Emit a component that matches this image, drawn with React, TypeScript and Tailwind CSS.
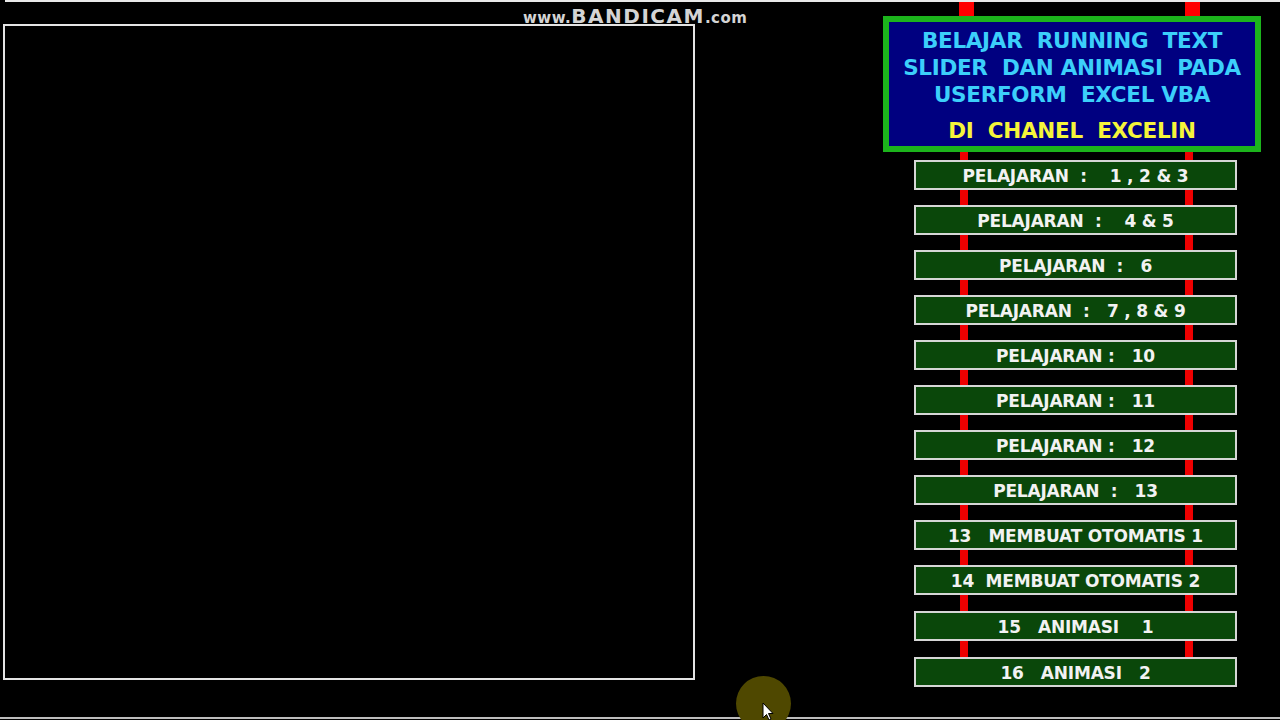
const LESSONS = [
  "PELAJARAN  :    1 , 2 & 3",
  "PELAJARAN  :    4 & 5",
  "PELAJARAN  :   6",
  "PELAJARAN  :   7 , 8 & 9",
  "PELAJARAN :   10",
  "PELAJARAN :   11",
  "PELAJARAN :   12",
  "PELAJARAN  :   13",
  "13   MEMBUAT OTOMATIS 1",
  "14  MEMBUAT OTOMATIS 2",
  "15   ANIMASI    1",
  "16   ANIMASI   2",
];

const font = { fontFamily: '"DejaVu Sans", Verdana, sans-serif' };

function Ropes({ h, wide }: { h: string; wide?: boolean }) {
  return (
    <div className={`flex ${h}`}>
      {wide ? (
        <>
          <div className="ml-[76px] w-[15px] bg-[#ff0000]" />
          <div className="ml-[211px] w-[15px] bg-[#ff0000]" />
        </>
      ) : (
        <>
          <div className="ml-[77px] w-[8px] bg-[#ee0000]" />
          <div className="ml-[217px] w-[8px] bg-[#ee0000]" />
        </>
      )}
    </div>
  );
}

export default function App() {
  return (
    <div className="relative w-[1280px] h-[720px] overflow-hidden bg-black" style={font}>
      <div className="flex h-full">
        <div className="ml-[3px] mt-[24px] w-[692px] h-[656px] border-2 border-[#e4e4e4] shrink-0" />
        <div className="ml-[188px] w-[378px] flex flex-col">
          <Ropes h="h-[16px]" wide />
          <div className="h-[136px] border-[6px] border-[#1cb41c] bg-[#000080] flex flex-col items-center pt-[5px] font-bold">
            <div className="text-[#3ccffa] text-[21.5px] leading-[27px] whitespace-pre tracking-[-0.3px]">
              {"BELAJAR  RUNNING  TEXT"}
            </div>
            <div className="text-[#3ccffa] text-[21.5px] leading-[27px] whitespace-pre tracking-[-0.3px]">
              {"SLIDER  DAN ANIMASI  PADA"}
            </div>
            <div className="text-[#3ccffa] text-[21.5px] leading-[27px] whitespace-pre tracking-[-0.3px]">
              {"USERFORM  EXCEL VBA"}
            </div>
            <div className="mt-[9px] text-[#f5f53a] text-[21.5px] leading-[27px] whitespace-pre tracking-[-0.3px]">
              {"DI  CHANEL  EXCELIN"}
            </div>
          </div>
          <Ropes h="h-[8px]" />
          {LESSONS.map((t, i) => (
            <div key={t}>
              <div className="ml-[31px] w-[323px] h-[30px] border-2 border-[#d6d6d6] bg-[#0a470a] flex items-center justify-center pt-[3px]">
                <span className="text-[#f2f2f2] font-bold text-[17px] whitespace-pre tracking-[-0.2px]">{t}</span>
              </div>
              {i < LESSONS.length - 1 && <Ropes h={i > 8 ? "h-[16px]" : "h-[15px]"} />}
            </div>
          ))}
        </div>
      </div>

      {/* recorder overlays */}
      <div className="absolute left-[5px] right-0 top-0 h-[2px] bg-[#e8e8e8]" />
      <div className="absolute left-0 right-0 bottom-[1px] h-[2px] bg-[#bdbdbd]" />
      <div className="absolute left-[523px] top-[1px] flex items-baseline text-[#d4d4d4] font-bold">
        <span className="text-[15px] tracking-[0.5px]">www.</span>
        <span className="text-[20px] tracking-[1.5px]">BANDICAM</span>
        <span className="text-[15px] tracking-[0.5px]">.com</span>
      </div>
      <div className="absolute left-[736px] top-[676px] w-[55px] h-[55px] rounded-full bg-[#4f4800]" />
      <svg className="absolute left-[762px] top-[702px]" width="14" height="20" viewBox="0 0 14 20">
        <path d="M1 1 L1 16 L4.5 12.5 L7 18 L9 17 L6.5 11.5 L11 11.5 Z" fill="#fff" stroke="#000" strokeWidth="1" />
      </svg>
    </div>
  );
}
